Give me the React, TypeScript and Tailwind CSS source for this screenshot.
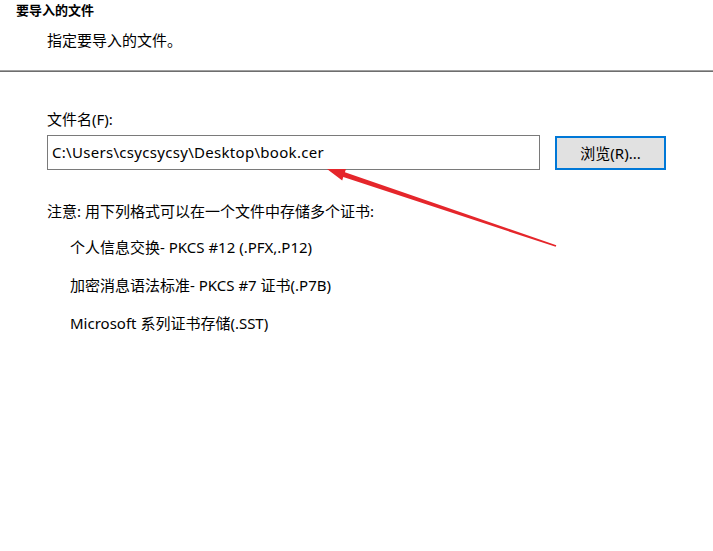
import React from "react";

const font = { fontFamily: '"Noto Sans", "Noto Sans CJK SC", sans-serif' };

export default function App() {
  return (
    <div
      className="relative w-[713px] h-[551px] bg-white overflow-hidden text-black"
      style={font}
    >
      <div className="h-[70px]">
        <div className="pl-[16px] pt-[2px] text-[13px] leading-[16px] font-bold">要导入的文件</div>
        <div className="pl-[47px] mt-[12px] text-[15px] leading-[20px]">指定要导入的文件。</div>
      </div>
      <div className="h-[1px] bg-[#a0a0a0]" />
      <div className="h-[1px] bg-[#6e6e6e]" />
      <div className="pl-[47px] pt-[37px] text-[15px] leading-[20px]">
        <div>文件名(F):</div>
        <div className="mt-[6px] flex items-center gap-[15px]">
          <div className="w-[493px] h-[35px] border border-[#7a7a7a] flex items-center pl-[4px] pb-[2px] tracking-[0.3px]">
            C:\Users\csycsycsy\Desktop\book.cer
          </div>
          <button className="w-[111px] h-[34px] border-2 border-[#0078d7] bg-[#e1e1e1] flex items-center justify-center">
            浏览(R)...
          </button>
        </div>
        <div className="mt-[31px]">注意: 用下列格式可以在一个文件中存储多个证书:</div>
        <div className="pl-[23px] mt-[16px] flex flex-col gap-[18px]">
          <div>个人信息交换- PKCS #12 (.PFX,.P12)</div>
          <div>加密消息语法标准- PKCS #7 证书(.P7B)</div>
          <div>Microsoft 系列证书存储(.SST)</div>
        </div>
      </div>
      <svg
        className="absolute inset-0 pointer-events-none"
        width="713"
        height="551"
        viewBox="0 0 713 551"
      >
        <polygon
          points="327,169 346,169 344.9,172.3 556.3,245.2 555.7,246.8 343.3,177.1 342.2,180.4"
          fill="#e5262b"
        />
      </svg>
    </div>
  );
}
